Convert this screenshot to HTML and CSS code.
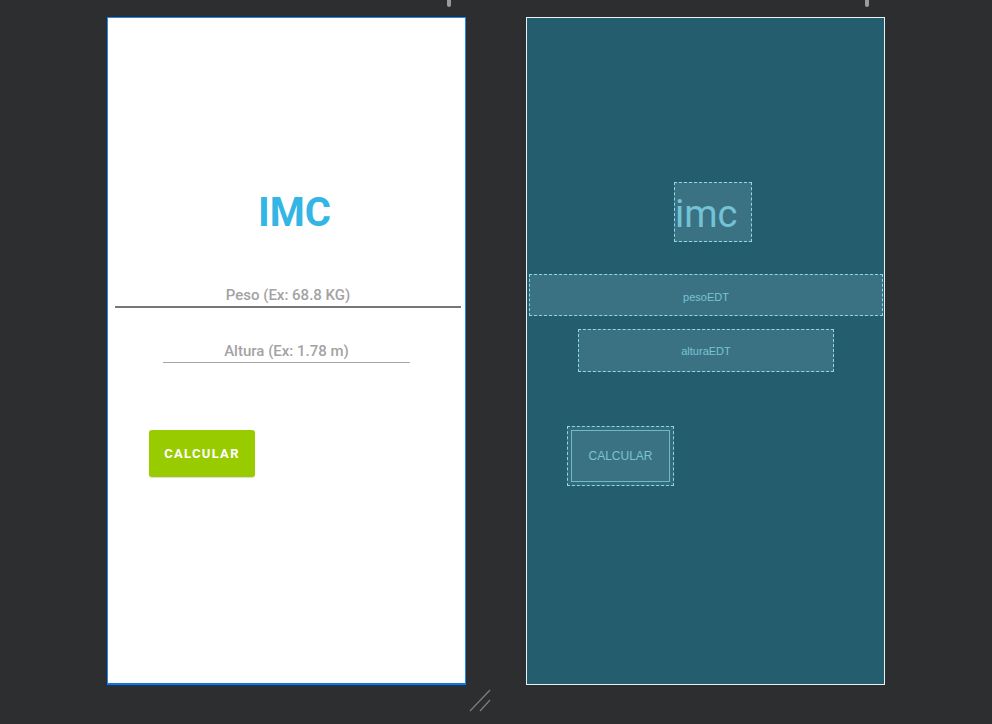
FILE: index.html
```html
<!DOCTYPE html>
<html>
<head>
  <meta charset="utf-8">
  <title>activity_main.xml</title>
<link rel="stylesheet" href="styles.css">
</head>
<body>
  <div class="canvas">
    <span class="handle handle-left"></span>
    <span class="handle handle-right"></span>

    <!-- design surface -->
    <div class="frame design">
      <div class="title">IMC</div>
      <div class="edit edit-peso">Peso (Ex: 68.8 KG)</div>
      <div class="edit edit-altura">Altura (Ex: 1.78 m)</div>
      <div class="btn">CALCULAR</div>
    </div>

    <!-- blueprint surface -->
    <div class="frame blueprint">
      <div class="bp bp-title">imc</div>
      <div class="bp bp-peso">pesoEDT</div>
      <div class="bp bp-altura">alturaEDT</div>
      <div class="bp bp-btn"><span>CALCULAR</span></div>
    </div>

    <svg class="resize" width="24" height="26" viewBox="0 0 24 26">
      <line x1="1" y1="24" x2="21" y2="3" stroke="#7c7c7c" stroke-width="1.3"/>
      <line x1="11" y1="24" x2="21" y2="13" stroke="#7c7c7c" stroke-width="1.3"/>
    </svg>
  </div>
</body>
</html>
```

FILE: styles.css
```css
html, body {
  margin: 0;
  height: 100%;
}

body {
  background: #2d2e30;
  font-family: Roboto, "Liberation Sans", sans-serif;
  overflow: hidden;
}

.canvas {
  position: relative;
  display: flex;
  gap: 60px;
  padding: 17px 0 0 107px;
}

.handle {
  position: absolute;
  top: 0;
  width: 4px;
  height: 7px;
  background: #9b9b9b;
  border-radius: 0 0 2px 2px;
}

.handle-left { left: 447px; }
.handle-right { left: 865px; }

.resize {
  position: absolute;
  left: 469px;
  top: 687px;
}

.frame {
  box-sizing: border-box;
  width: 359px;
  height: 668px;
  display: flex;
  flex-direction: column;
  align-items: flex-start;
}

/* design view */
.design {
  background: #fff;
  border: 1px solid #1e88f0;
  border-bottom: 2px solid #1a72d6;
  box-shadow: 0 1px 0 #0b3a70;
}

.title {
  margin: 175px 0 0 16px;
  align-self: center;
  font-size: 40px;
  line-height: 40px;
  font-weight: 700;
  color: #33b5e5;
}

.edit {
  box-sizing: border-box;
  font-size: 15px;
  line-height: 20px;
  font-weight: 500;
  color: #a3a3a3;
  text-align: center;
  padding-bottom: 1px;
}

.edit-peso {
  margin: 52px 0 0 7px;
  width: 346px;
  border-bottom: 2px solid #767676;
}

.edit-altura {
  margin: 33px 0 0 55px;
  width: 247px;
  border-bottom: 1px solid #a6a6a6;
}

.btn {
  margin: 67px 0 0 41px;
  width: 106px;
  height: 47px;
  border-radius: 3px;
  background: #99cc00;
  color: #fff;
  font-size: 13px;
  font-weight: 700;
  letter-spacing: 1.3px;
  display: flex;
  align-items: center;
  justify-content: center;
  box-shadow: 0 1px 1px rgba(0, 0, 0, 0.15);
}

/* blueprint view */
.blueprint {
  background: #245d6d;
  border: 1px solid #e8f2f5;
}

.bp {
  box-sizing: border-box;
  background: #3a7283;
  border: 1px dashed #8fd6e8;
  color: #79c3d5;
  display: flex;
  align-items: center;
  justify-content: center;
  font-family: "Liberation Sans", Arial, sans-serif;
  font-size: 11px;
}

.bp-title {
  margin: 164px 0 0 147px;
  width: 78px;
  height: 60px;
  justify-content: flex-start;
  padding: 4px 0 0 0;
  font-family: Roboto, "Liberation Sans", sans-serif;
  font-size: 38px;
  font-weight: 400;
  color: #74c2d5;
}

.bp-peso {
  margin: 32px 0 0 2px;
  width: 354px;
  height: 42px;
  padding-top: 3px;
}

.bp-altura {
  margin: 13px 0 0 51px;
  width: 256px;
  height: 43px;
}

.bp-btn {
  margin: 54px 0 0 40px;
  width: 107px;
  height: 60px;
  padding: 3px;
  background: #336b7b;
}

.bp-btn span {
  box-sizing: border-box;
  flex: 1;
  align-self: stretch;
  display: flex;
  align-items: center;
  justify-content: center;
  background: #3a7283;
  border: 1px solid #6fb8ca;
  font-size: 12px;
}
```
